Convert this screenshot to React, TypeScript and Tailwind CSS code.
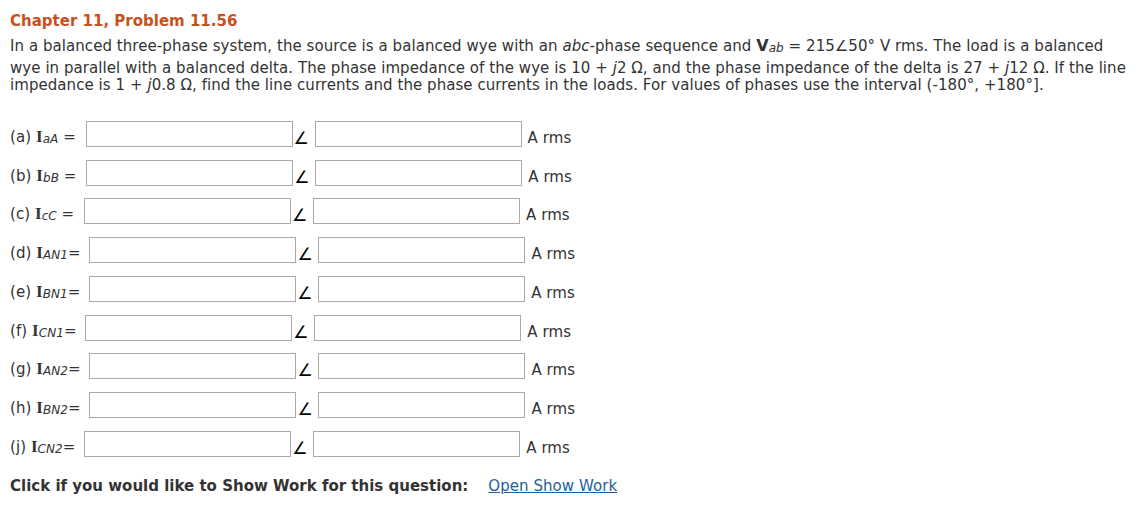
import React from 'react';

interface Row {
  letter: string;
  sub: string;
  tight?: boolean;
}

const rows: Row[] = [
  { letter: 'a', sub: 'aA' },
  { letter: 'b', sub: 'bB' },
  { letter: 'c', sub: 'cC' },
  { letter: 'd', sub: 'AN1', tight: true },
  { letter: 'e', sub: 'BN1', tight: true },
  { letter: 'f', sub: 'CN1', tight: true },
  { letter: 'g', sub: 'AN2', tight: true },
  { letter: 'h', sub: 'BN2', tight: true },
  { letter: 'j', sub: 'CN2', tight: true },
];

const Bold = ({ children }: { children: React.ReactNode }) => (
  <span className="font-['Liberation_Serif'] font-bold text-[17px]">{children}</span>
);

const Sub = ({ children }: { children: React.ReactNode }) => (
  <sub className="italic text-[12px] relative top-[1px]">{children}</sub>
);

const AnswerRow: React.FC<{ row: Row }> = ({ row }) => (
  <div className="flex items-end h-[38.75px] pb-[6px]">
    <span className="whitespace-pre leading-[20px]">
      ({row.letter}) <Bold>I</Bold>
      <Sub>{row.sub}</Sub>
      {row.tight ? '=' : ' ='}{' '}
    </span>
    <input
      className={
        row.tight
          ? 'ml-[4px] w-[207px] h-[26px] border border-[#aaa] bg-white outline-none'
          : 'ml-[5px] w-[207px] h-[26px] border border-[#aaa] bg-white outline-none'
      }
    />
    <span className="inline-block w-[22px] pl-[1px] text-black text-[17px] leading-[18px]">∠</span>
    <input className="w-[207px] h-[26px] border border-[#aaa] bg-white outline-none" />
    <span className="ml-[6px] leading-[18px]">A rms</span>
  </div>
);

export default function App() {
  return (
    <div className="px-[10px] pt-[11px] font-['DejaVu_Sans',sans-serif] text-[15px] tracking-[0.06px] text-[#333]">
      <h2 className="text-[15px] tracking-normal font-bold text-[#c9501c] leading-[20px]">Chapter 11, Problem 11.56</h2>
      <div className="whitespace-nowrap mt-[3px]">
        <div className="h-[25px] leading-[22px] pt-[1px]">
          In a balanced three-phase system, the source is a balanced wye with an <i>abc</i>-phase sequence and{' '}
          <b className="text-[16px]">V</b>
          <Sub>ab</Sub> = 215∠50° V rms. The load is a balanced
        </div>
        <div className="h-[17px] leading-[19px]">
          wye in parallel with a balanced delta. The phase impedance of the wye is 10 + <i>j</i>2 Ω, and the phase
          impedance of the delta is 27 + <i>j</i>12 Ω. If the line
        </div>
        <div className="h-[18px] leading-[18px]">
          impedance is 1 + <i>j</i>0.8 Ω, find the line currents and the phase currents in the loads. For values of
          phases use the interval (-180°, +180°].
        </div>
      </div>
      <div className="mt-[20px] flex flex-col">
        {rows.map(r => (
          <AnswerRow key={r.letter} row={r} />
        ))}
      </div>
      <div className="flex items-baseline mt-[12px]">
        <span className="font-bold tracking-normal">Click if you would like to Show Work for this question:</span>
        <a href="#" className="ml-[20px] text-[#1f5e9c] underline">
          Open Show Work
        </a>
      </div>
    </div>
  );
}
